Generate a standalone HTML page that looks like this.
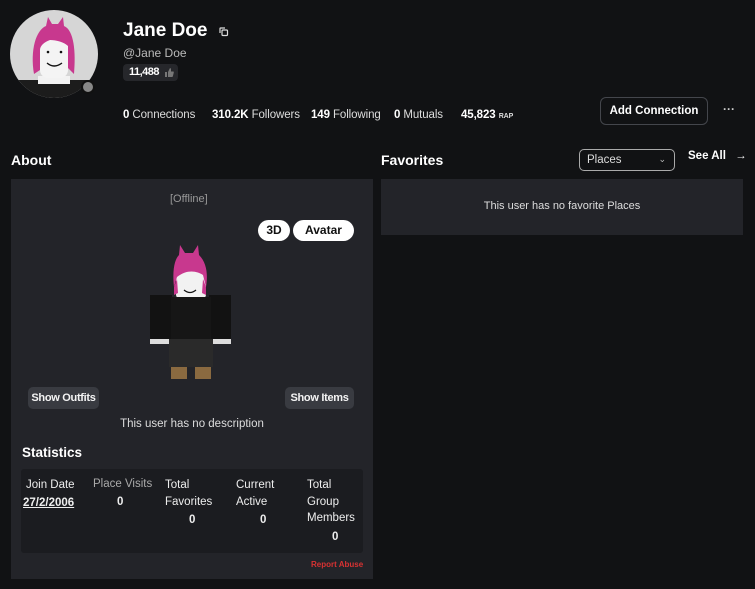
<!DOCTYPE html>
<html><head><meta charset="utf-8"><style>
*{margin:0;padding:0;box-sizing:border-box}
body{width:755px;height:589px;background:#111214;font-family:"Liberation Sans",sans-serif;color:#fff;position:relative;overflow:hidden}
.a{position:absolute;white-space:nowrap}
.b{font-weight:bold}
.stat{font-size:11.5px;color:#ddd;letter-spacing:-0.1px}
.stat b{color:#fff}
.pill{position:absolute;background:#fff;color:#111;border-radius:11px;font-weight:bold;font-size:12px;text-align:center;line-height:21px;height:21px}
.btn{position:absolute;background:#393b41;border-radius:5px;font-size:11px;font-weight:bold;text-align:center;height:22px;line-height:22px;color:#f4f4f4;letter-spacing:-0.3px}
.st{position:absolute;font-size:11.5px;color:#eee;line-height:16.5px}
</style></head><body>
<svg class="a" style="left:10px;top:10px" width="90" height="90" viewBox="0 0 90 90">
<defs><clipPath id="c"><circle cx="44" cy="44" r="44"/></clipPath></defs>
<circle cx="44" cy="44" r="44" fill="#d6d6d6"/>
<g clip-path="url(#c)">
<rect x="8" y="70" width="72" height="20" fill="#1c1c1c"/>
<rect x="28" y="66" width="32" height="8" fill="#f2f2f2"/>
<rect x="30" y="28" width="28" height="40" rx="8" fill="#f4f4f4"/>
<path d="M24 64 C20 40 26 20 36 16 L38 7 L42 14 L48 14 L53 7 L54 16 C64 20 66 42 64 64 L58 58 L58 36 C54 32 46 30 40 30 C34 32 30 36 30 40 L30 60 Z" fill="#c8388e"/>
<circle cx="38" cy="42" r="1.3" fill="#111"/><circle cx="51" cy="42" r="1.3" fill="#111"/>
<path d="M37 53 Q44 59 52 53" stroke="#111" stroke-width="1.4" fill="none"/>
</g>
<circle cx="78" cy="77" r="6" fill="#888" stroke="#111" stroke-width="2"/>
</svg>
<div class="a b" style="left:123px;top:20px;font-size:19px">Jane Doe</div>
<svg class="a" style="left:218px;top:26px" width="11" height="11" viewBox="0 0 11 11" fill="none" stroke="#ddd" stroke-width="1.2"><rect x="4" y="4" width="5.5" height="5.5" rx="1"/><path d="M2 7V2.5Q2 2 2.5 2H7"/></svg>
<div class="a" style="left:123px;top:46px;font-size:12px;color:#bbb">@Jane Doe</div>
<div class="a" style="left:123px;top:64px;width:55px;height:17px;background:#26272b;border-radius:4px;font-size:11px;font-weight:bold;line-height:17px;padding-left:6px;letter-spacing:-0.5px">11,488
<svg style="position:absolute;left:42px;top:4px" width="9" height="9" viewBox="0 0 9 9"><path d="M0 4h2v5H0z M3 4 L5 0 Q6 0 6 2 V3.5 H8.5 Q9 4 8.7 5 L7.8 8.5 Q7.5 9 7 9 H3Z" fill="#777"/></svg></div>
<div class="a stat" style="left:123px;top:109px"><b>0</b> Connections</div>
<div class="a stat" style="left:212px;top:109px"><b>310.2K</b> Followers</div>
<div class="a stat" style="left:311px;top:109px"><b>149</b> Following</div>
<div class="a stat" style="left:394px;top:109px"><b>0</b> Mutuals</div>
<div class="a stat" style="left:461px;top:109px"><b>45,823</b> <span style="font-size:7px;font-weight:bold">RAP</span></div>
<div class="a b" style="left:600px;top:97px;width:108px;height:28px;border:1px solid #44464c;border-radius:6px;font-size:11.5px;text-align:center;line-height:26px">Add Connection</div>
<div class="a b" style="left:723px;top:102px;font-size:12px;color:#ccc">···</div>
<div class="a b" style="left:11px;top:152px;font-size:14px">About</div>
<div class="a b" style="left:381px;top:152px;font-size:14px">Favorites</div>
<div class="a" style="left:579px;top:149px;width:96px;height:22px;border:1px solid #aaa;border-radius:5px;font-size:11.5px;color:#ddd;line-height:20px;padding-left:7px">Places<span style="position:absolute;right:8px;top:-1px;font-size:9px;color:#bbb">⌄</span></div>
<div class="a b" style="left:688px;top:150px;font-size:11.5px">See All <span style="margin-left:6px;font-weight:normal">→</span></div>
<div class="a" style="left:381px;top:179px;width:362px;height:56px;background:#232429;font-size:11px;color:#ddd;text-align:center;line-height:54px">This user has no favorite Places</div>
<div class="a" style="left:11px;top:179px;width:362px;height:400px;background:#232429"></div>
<div class="a" style="left:170px;top:193px;font-size:11px;color:#999">[Offline]</div>
<div class="pill" style="left:258px;top:220px;width:32px">3D</div>
<div class="pill" style="left:293px;top:220px;width:61px">Avatar</div>
<svg class="a" style="left:145px;top:243px" width="95" height="140" viewBox="0 0 95 140">
<rect x="31" y="24" width="30" height="34" rx="7" fill="#f2f2f2"/>
<path d="M29 44 C27 26 30 16 34 12 L35 2 L40 10 L48 10 L53 2 L54 12 C62 20 63 32 61 44 L58 32 C52 28 42 26 32 34 Z" fill="#c8388e"/>
<path d="M29 44 L29 52 L33 50 L32 36Z M61 44 L61 52 L57 50 L58 36Z" fill="#c8388e"/>
<path d="M39 47 Q45 52 51 47" stroke="#111" stroke-width="1.2" fill="none"/>
<rect x="5" y="52" width="22" height="46" fill="#121212"/><rect x="5" y="96" width="22" height="5" fill="#ddd"/>
<rect x="64" y="52" width="22" height="46" fill="#121212"/><rect x="64" y="96" width="22" height="5" fill="#ddd"/>
<rect x="26" y="54" width="40" height="44" fill="#161616"/>
<rect x="24" y="96" width="44" height="28" fill="#2a2a2a"/>
<rect x="26" y="124" width="16" height="12" fill="#8a6a40"/><rect x="50" y="124" width="16" height="12" fill="#8a6a40"/>
</svg>
<div class="btn" style="left:28px;top:387px;width:71px">Show Outfits</div>
<div class="btn" style="left:285px;top:387px;width:69px">Show Items</div>
<div class="a" style="left:11px;top:418px;width:362px;text-align:center;font-size:11.5px;color:#ddd">This user has no description</div>
<div class="a b" style="left:22px;top:445px;font-size:13.5px">Statistics</div>
<div class="a" style="left:21px;top:469px;width:342px;height:84px;background:#1b1c20;border-radius:3px"></div>
<div class="st" style="left:26px;top:477px">Join Date</div>
<div class="st b" style="left:23px;top:495px;text-decoration:underline">27/2/2006</div>
<div class="st" style="left:93px;top:476px;color:#aaa">Place Visits</div>
<div class="st b" style="left:117px;top:494px">0</div>
<div class="st" style="left:165px;top:477px">Total<br>Favorites</div>
<div class="st b" style="left:189px;top:512px">0</div>
<div class="st" style="left:236px;top:477px">Current<br>Active</div>
<div class="st b" style="left:260px;top:512px">0</div>
<div class="st" style="left:307px;top:477px">Total<br>Group<br>Members</div>
<div class="st b" style="left:332px;top:529px">0</div>
<div class="a b" style="left:311px;top:560px;font-size:8px;color:#d83232">Report Abuse</div>
</body></html>
